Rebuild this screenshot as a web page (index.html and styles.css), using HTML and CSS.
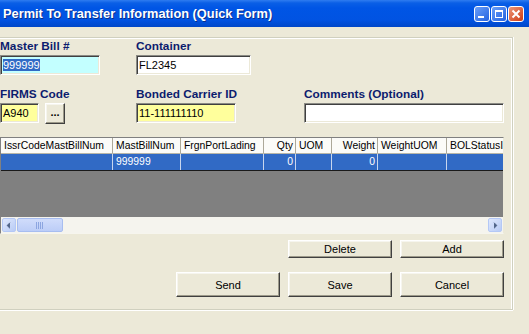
FILE: index.html
```html
<!DOCTYPE html>
<html>
<head>
<meta charset="utf-8">
<link rel="stylesheet" href="styles.css">
</head>
<body>
<div class="window">
  <div class="titlebar">
    <span class="title">Permit To Transfer Information (Quick Form)</span>
    <div class="tbtns">
      <span class="tbtn"><svg width="16" height="16" viewBox="0 0 16 16"><rect x="4" y="10" width="6" height="2" fill="#fff"/></svg></span>
      <span class="tbtn"><svg width="16" height="16" viewBox="0 0 16 16"><rect x="4.5" y="4.5" width="7" height="7" fill="none" stroke="#fff" stroke-width="1"/><rect x="4" y="4" width="8" height="2" fill="#fff"/></svg></span>
      <span class="tbtn close"><svg width="16" height="16" viewBox="0 0 16 16"><path d="M4.5 4.5 L11.5 11.5 M11.5 4.5 L4.5 11.5" stroke="#fff" stroke-width="2"/></svg></span>
    </div>
  </div>
  <div class="frame">
    <div class="row">
      <div class="field w136">
        <div class="lbl">Master Bill #</div>
        <div class="inp cyan w100"><span class="sel">999999</span></div>
      </div>
      <div class="field">
        <div class="lbl">Container</div>
        <div class="inp white w115">FL2345</div>
      </div>
    </div>
    <div class="row row2">
      <div class="field w136">
        <div class="lbl">FIRMS Code</div>
        <div class="pair">
          <div class="inp yellow w39">A940</div>
          <div class="btn dots">...</div>
        </div>
      </div>
      <div class="field w168">
        <div class="lbl">Bonded Carrier ID</div>
        <div class="inp yellow w100">11-111111110</div>
      </div>
      <div class="field">
        <div class="lbl">Comments (Optional)</div>
        <div class="inp white w200"></div>
      </div>
    </div>
    <div class="grid">
      <div class="ghead">
        <div class="c c1">IssrCodeMastBillNum</div>
        <div class="c c2">MastBillNum</div>
        <div class="c c3">FrgnPortLading</div>
        <div class="c c4 r">Qty</div>
        <div class="c c5">UOM</div>
        <div class="c c6 r">Weight</div>
        <div class="c c7">WeightUOM</div>
        <div class="c c8">BOLStatusI</div>
      </div>
      <div class="grow">
        <div class="c c1"></div>
        <div class="c c2">999999</div>
        <div class="c c3"></div>
        <div class="c c4 r">0</div>
        <div class="c c5"></div>
        <div class="c c6 r">0</div>
        <div class="c c7"></div>
        <div class="c c8"></div>
      </div>
      <div class="gempty"></div>
      <div class="hscroll">
        <div class="sbtn"><svg width="13" height="13" viewBox="0 0 13 13"><path d="M7.5 3.5 L4.5 6.5 L7.5 9.5" fill="#4d6185" stroke="#4d6185"/></svg></div>
        <div class="thumb"><svg width="10" height="7" viewBox="0 0 10 7"><path d="M1.5 0V7M3.5 0V7M5.5 0V7M7.5 0V7" stroke="#8ca5e0"/></svg></div>
        <div class="track"></div>
        <div class="sbtn"><svg width="13" height="13" viewBox="0 0 13 13"><path d="M5.5 3.5 L8.5 6.5 L5.5 9.5" fill="#4d6185" stroke="#4d6185"/></svg></div>
      </div>
    </div>
    <div class="brow brow1">
      <div class="btn b104 sm">Delete</div>
      <div class="btn b104 sm">Add</div>
    </div>
    <div class="brow brow2">
      <div class="btn b104 lg">Send</div>
      <div class="btn b104 lg">Save</div>
      <div class="btn b104 lg">Cancel</div>
    </div>
  </div>
</div>
</body>
</html>
```

FILE: styles.css
```css
* { box-sizing: border-box; }
html, body { margin: 0; padding: 0; }
body {
  width: 529px;
  height: 334px;
  overflow: hidden;
  background: #ECE9D8;
  font-family: "Liberation Sans", Arial, sans-serif;
  font-size: 11px;
  color: #000;
}
.window { width: 529px; height: 334px; }
.titlebar {
  height: 27px;
  background: linear-gradient(#2f7cf0 0px, #0a5fe6 3px, #0055e5 8px, #0153e2 20px, #0047c8 27px);
  display: flex;
  align-items: center;
  justify-content: space-between;
  padding: 0 5px 1px 3px;
}
.title {
  color: #fff;
  font-weight: bold;
  font-size: 12.8px;
  text-shadow: 1px 1px #0a2f8c;
}
.tbtns { display: flex; gap: 1px; margin-top: 1px; }
.tbtn {
  width: 16px; height: 16px;
  border: 1px solid #fff;
  border-radius: 3px;
  background: linear-gradient(135deg, #6a9ff9, #2462e0);
  display: flex;
}
.tbtn svg { margin: -1px; }
.tbtn.close { background: linear-gradient(135deg, #ec9678, #cf3a12); }
.frame {
  margin-top: 10px;
  width: 513px;
  height: 273px;
  border-top: 1px solid #D0D0BF;
  border-right: 1px solid #D0D0BF;
  border-bottom: 1px solid #D0D0BF;
  box-shadow: inset 0 1px #fff, inset -1px 0 #fff, 0 1px #fff, 1px 0 #fff;
  padding: 2px 8px 0 0;
}
.row { display: flex; }
.row2 { margin-top: 13px; }
.field { display: flex; flex-direction: column; gap: 2px; }
.w136 { width: 136px; }
.w168 { width: 168px; }
.lbl {
  font-weight: bold;
  font-size: 11.8px;
  color: #0c1c6e;
  height: 13px;
  line-height: 13px;
  white-space: nowrap;
}
.inp {
  height: 20px;
  border: 1px solid;
  border-color: #8a8a84 #fff #fff #8a8a84;
  box-shadow: inset 1px 1px #404040, inset -1px -1px #ECE9D8;
  padding: 2px 2px 0 2px;
  line-height: 15px;
  white-space: nowrap;
  overflow: hidden;
}
.cyan { background: #C3FFFF; }
.white { background: #fff; }
.yellow { background: #FFFF9C; }
.w100 { width: 100px; }
.w115 { width: 115px; }
.w39 { width: 39px; }
.w200 { width: 200px; }
.sel { background: #316AC5; color: #fff; }
.pair { display: flex; gap: 6px; }
.btn {
  background: #ECE9D8;
  border: 1px solid;
  border-color: #fff #404040 #404040 #fff;
  box-shadow: inset -1px -1px #9d9a8a, inset 1px 1px #f6f5ee;
  display: flex;
  align-items: center;
  justify-content: center;
}
.dots { width: 20px; height: 21px; font-weight: bold; padding-bottom: 4px; }
.grid {
  margin-top: 13px;
  width: 504px;
  height: 97px;
  border: 1px solid;
  border-color: #808080 #ECE9D8 #f6f5ee #808080;
  background: #808080;
  display: flex;
  flex-direction: column;
  overflow: hidden;
}
.ghead, .grow { display: flex; height: 16px; flex: none; font-size: 10.4px; }
.ghead { background: #FBFBF8; border-bottom: 1px solid #b8b6a8; height: 16px; }
.grow { background: #316AC5; color: #fff; border-bottom: 1px solid #1a1a1a; height: 17px; }
.c {
  flex: none;
  border-right: 1px solid #ACA899;
  padding: 0 2px 0 3px;
  line-height: 15px;
  white-space: nowrap;
  overflow: hidden;
}
.grow .c { border-right-color: #c8d6ee; }
.r { text-align: right; }
.c1 { width: 112px; }
.c2 { width: 68px; }
.c3 { width: 83px; }
.c4 { width: 32px; }
.c5 { width: 36px; }
.c6 { width: 46px; }
.c7 { width: 69px; }
.c8 { width: 57px; border-right: none; }
.gempty { flex: 1; background: #808080; }
.hscroll {
  height: 16px;
  flex: none;
  background: #F5F4EE;
  display: flex;
  align-items: center;
  padding: 0 1px 0 1px;
  gap: 1px;
}
.sbtn {
  width: 14px; height: 14px;
  border: 1px solid #b4c8f6;
  border-radius: 2px;
  background: linear-gradient(135deg, #dfe8fd, #b8cbf5);
  display: flex;
}
.thumb {
  width: 46px; height: 14px;
  border: 1px solid #a7bdf0;
  border-radius: 2px;
  background: linear-gradient(#d0dcfb, #bccdf7);
  display: flex; align-items: center; justify-content: center;
}
.track { flex: 1; }
.brow { display: flex; justify-content: flex-end; gap: 8px; }
.brow1 { margin-top: 6px; }
.brow2 { margin-top: 14px; }
.b104 { width: 104px; }
.sm { height: 18px; }
.lg { height: 25px; }
```
